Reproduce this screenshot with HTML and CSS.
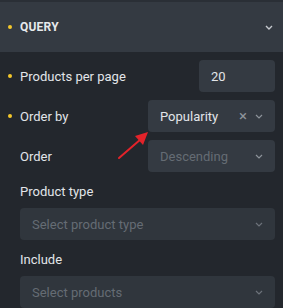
FILE: index.html
```html
<!DOCTYPE html>
<html lang="en">
<head>
    <meta charset="UTF-8">
    <meta name="viewport" content="width=device-width, initial-scale=1.0">
    <title>Query controls</title>
    <link rel="stylesheet" href="styles.css">
</head>
<body>
    <div class="panel">
        <div class="section-header">
            <span class="dot"></span>
            <span class="section-title">QUERY</span>
            <svg class="chevron head-chevron" viewBox="0 0 8 5" width="8" height="5">
                <path d="M1 1 L4 4 L7 1" fill="none" stroke="#c5c9ce" stroke-width="1.4"/>
            </svg>
        </div>

        <div class="controls">
            <div class="row">
                <span class="dot"></span>
                <span class="label">Products per page</span>
                <div class="field field-number">20</div>
            </div>

            <div class="row">
                <span class="dot"></span>
                <span class="label">Order by</span>
                <div class="field field-select">
                    <span class="value">Popularity</span>
                    <span class="clear">&times;</span>
                    <svg class="chevron" viewBox="0 0 8 5" width="8" height="5">
                        <path d="M1 1 L4 4 L7 1" fill="none" stroke="#8d939a" stroke-width="1.2"/>
                    </svg>
                </div>
            </div>

            <div class="row">
                <span class="dot dot-empty"></span>
                <span class="label">Order</span>
                <div class="field field-select">
                    <span class="value muted">Descending</span>
                    <svg class="chevron" viewBox="0 0 8 5" width="8" height="5">
                        <path d="M1 1 L4 4 L7 1" fill="none" stroke="#8d939a" stroke-width="1.2"/>
                    </svg>
                </div>
            </div>

            <div class="stack">
                <span class="label">Product type</span>
                <div class="field field-select">
                    <span class="value muted">Select product type</span>
                    <svg class="chevron" viewBox="0 0 8 5" width="8" height="5">
                        <path d="M1 1 L4 4 L7 1" fill="none" stroke="#6c727a" stroke-width="1.2"/>
                    </svg>
                </div>
            </div>

            <div class="stack">
                <span class="label">Include</span>
                <div class="field field-select">
                    <span class="value muted">Select products</span>
                    <svg class="chevron" viewBox="0 0 8 5" width="8" height="5">
                        <path d="M1 1 L4 4 L7 1" fill="none" stroke="#6c727a" stroke-width="1.2"/>
                    </svg>
                </div>
            </div>
        </div>

        <!-- annotation arrow pointing at the Order by select -->
        <svg class="annotation" viewBox="0 0 34 30" width="34" height="30">
            <line x1="2" y1="27" x2="24" y2="8" stroke="#e3232a" stroke-width="2" stroke-linecap="round"/>
            <polygon points="31,1 18,5 26,14" fill="#e3232a"/>
        </svg>
    </div>
</body>
</html>
```

FILE: styles.css
```css
* {
    margin: 0;
    padding: 0;
    box-sizing: border-box;
}

body {
    font-family: Roboto, "Liberation Sans", sans-serif;
    background-color: #23272d;
    color: #e2e5e9;
    width: 283px;
    height: 308px;
    overflow: hidden;
}

.panel {
    position: relative;
    border-top: 2px solid #2a2f36;
}

.section-header {
    height: 50px;
    background: #343a42;
    display: flex;
    align-items: center;
    padding: 0 10px 0 8px;
}

.section-title {
    font-size: 12px;
    font-weight: 700;
    letter-spacing: 0.2px;
    margin-left: 8px;
    flex: 1;
    color: #e6e9ec;
}

.dot {
    width: 4px;
    height: 4px;
    border-radius: 50%;
    background: #f5c82b;
    flex-shrink: 0;
}

.dot-empty {
    background: transparent;
}

.controls {
    padding: 8px 8px 0 8px;
    display: flex;
    flex-direction: column;
    gap: 8px;
}

.row {
    display: flex;
    align-items: center;
    height: 32px;
}

.row .label {
    margin-left: 8px;
    flex: 1;
}

.label {
    font-size: 13px;
    color: #e2e5e9;
}

.field {
    height: 32px;
    background: #343a42;
    border-radius: 4px;
    display: flex;
    align-items: center;
    font-size: 13px;
    padding: 0 12px;
}

.field-number {
    width: 76px;
}

.row .field-select {
    width: 127px;
}

.field-select .value {
    flex: 1;
}

.muted {
    color: #656c74;
}

.clear {
    color: #8d939a;
    font-size: 15px;
    margin-right: 8px;
    line-height: 1;
}

.chevron {
    display: block;
}

.stack {
    display: flex;
    flex-direction: column;
    gap: 6px;
    padding-left: 12px;
}

.stack .label {
    line-height: 20px;
    margin-top: 2px;
}

.stack .field {
    background: #30363d;
}

.annotation {
    position: absolute;
    left: 117px;
    top: 129px;
}
```
